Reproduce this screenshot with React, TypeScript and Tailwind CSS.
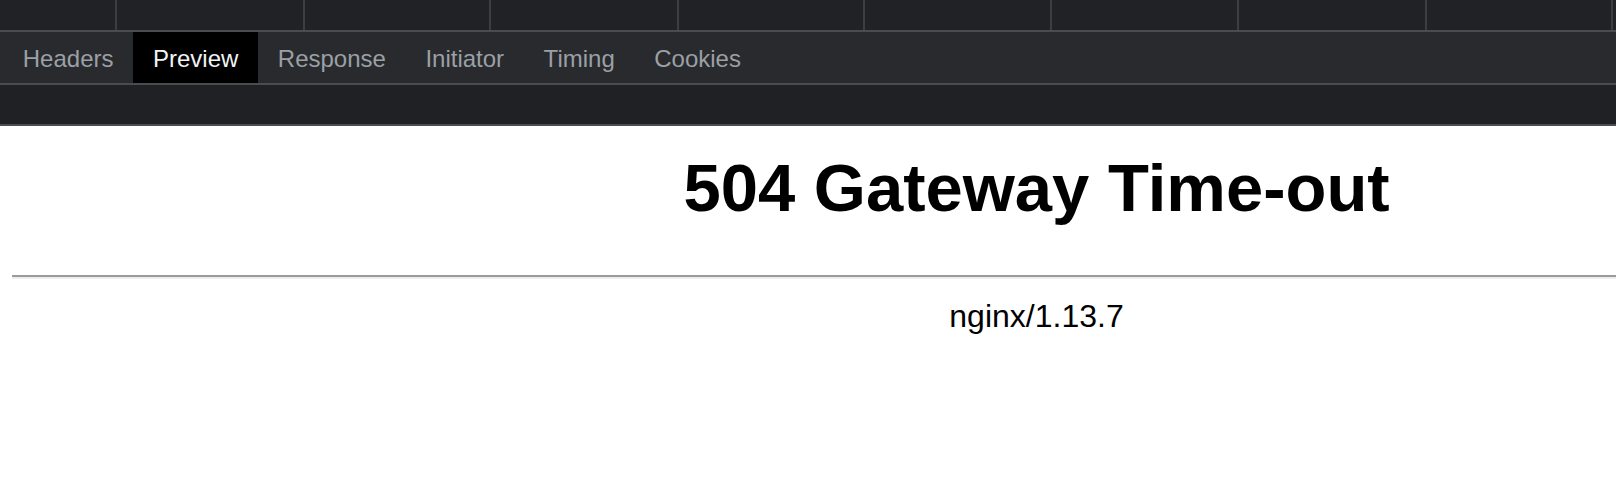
const COLUMNS = [117, 188, 186, 188, 186, 187, 187, 188, 186];
const TABS = ["Headers", "Preview", "Response", "Initiator", "Timing", "Cookies"];

export default function App() {
  const active = "Preview";

  return (
    <div className="flex h-[480px] w-[1616px] flex-col overflow-hidden bg-white font-['Liberation_Sans',Arial,sans-serif]">
      {/* table header strip */}
      <div className="flex h-[32px] shrink-0 border-b-2 border-[#4a4c50] bg-[#212226]">
        {COLUMNS.map((w, i) => (
          <div key={i} className="h-full shrink-0 border-r-2 border-[#3d3e42]" style={{ width: w }} />
        ))}
      </div>

      {/* tabs */}
      <div className="flex h-[53px] shrink-0 border-b-2 border-[#4a4c50] bg-[#292a2d] pl-[3px]">
        {TABS.map((t) => (
          <button
            key={t}
            type="button"
            className={
              t === active
                ? "flex h-full items-center bg-black px-[19.75px] pt-[2px] text-[24px] text-[#f1f3f4]"
                : "flex h-full items-center px-[19.75px] pt-[2px] text-[24px] text-[#9aa0a6]"
            }
          >
            {t}
          </button>
        ))}
      </div>

      {/* toolbar band */}
      <div className="h-[41px] shrink-0 border-b-2 border-[#4a4c50] bg-[#202124]" />

      {/* preview frame */}
      <div className="flex-1 overflow-hidden bg-white">
        <div className="ml-[12px] w-[2049px] pt-[23px] text-black">
          <h1 className="text-center text-[67px] font-bold leading-[77px]">504 Gateway Time-out</h1>
          <hr className="mt-[49px] border-t-2 border-b-2 border-t-[#9a9a9a] border-b-[#eeeeee]" />
          <p className="mt-[19px] text-center text-[32px] leading-[37px]">nginx/1.13.7</p>
        </div>
      </div>
    </div>
  );
}
